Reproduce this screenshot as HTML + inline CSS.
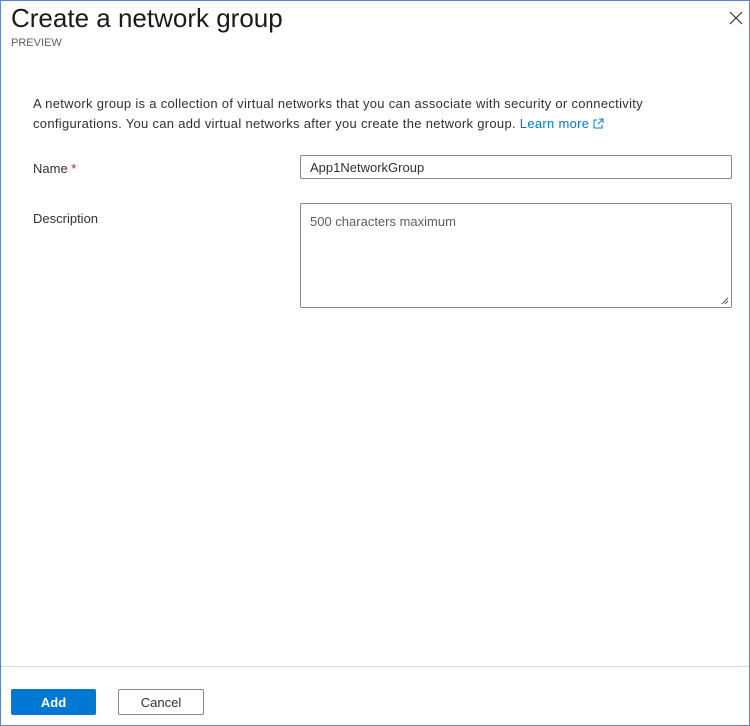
<!DOCTYPE html>
<html><head><style>
body{margin:0;width:750px;height:726px;font-family:"Liberation Sans",sans-serif;overflow:hidden}
.frame{position:absolute;left:0;top:0;width:748px;height:724px;border:1px solid #5b86c9;background:#fff}
.a{position:absolute}
</style></head><body>
<div class="frame"></div>
<div class="a" style="left:11px;top:3px;font-size:26px;color:#1b1b1b">Create a network group</div>
<div class="a" style="left:11px;top:37px;font-size:11px;color:#605e5c">PREVIEW</div>
<svg class="a" style="left:729px;top:11px" width="14" height="14"><path d="M1 1L13 13M13 1L1 13" stroke="#333" stroke-width="1.2"/></svg>
<div class="a" style="left:33px;top:94px;font-size:13px;line-height:20px;color:#323130;width:660px;letter-spacing:0.3px">A network group is a collection of virtual networks that you can associate with security or connectivity configurations. You can add virtual networks after you create the network group. <span style="color:#0078d4">Learn more <svg width="11" height="11" style="vertical-align:-1px"><path d="M6 1H10V5M10 1L5 6M4 2H1V10H9V7" fill="none" stroke="#0078d4"/></svg></span></div>
<div class="a" style="left:33px;top:161px;font-size:13px;color:#323130">Name <span style="color:#a4262c">*</span></div>
<div class="a" style="left:300px;top:155px;width:430px;height:22px;border:1px solid #8a8886;border-radius:2px;font-size:13px;line-height:24px;color:#323130;text-indent:9px">App1NetworkGroup</div>
<div class="a" style="left:33px;top:211px;font-size:13px;color:#323130">Description</div>
<div class="a" style="left:300px;top:203px;width:430px;height:103px;border:1px solid #8a8886;border-radius:2px;font-size:13px;color:#605e5c"><div style="margin:10px 0 0 9px">500 characters maximum</div></div>
<svg class="a" style="left:721px;top:297px" width="8" height="8"><path d="M7 1L1 7M7 4L4 7" stroke="#555"/></svg>
<div class="a" style="left:1px;top:666px;width:748px;height:1px;background:#d8d8d8"></div>
<div class="a" style="left:11px;top:689px;width:85px;height:26px;background:#0078d4;border-radius:2px;color:#fff;font-size:13px;font-weight:bold;text-align:center;line-height:27px">Add</div>
<div class="a" style="left:118px;top:689px;width:84px;height:24px;border:1px solid #8a8886;border-radius:2px;color:#323130;font-size:13px;text-align:center;line-height:26px">Cancel</div>
</body></html>
